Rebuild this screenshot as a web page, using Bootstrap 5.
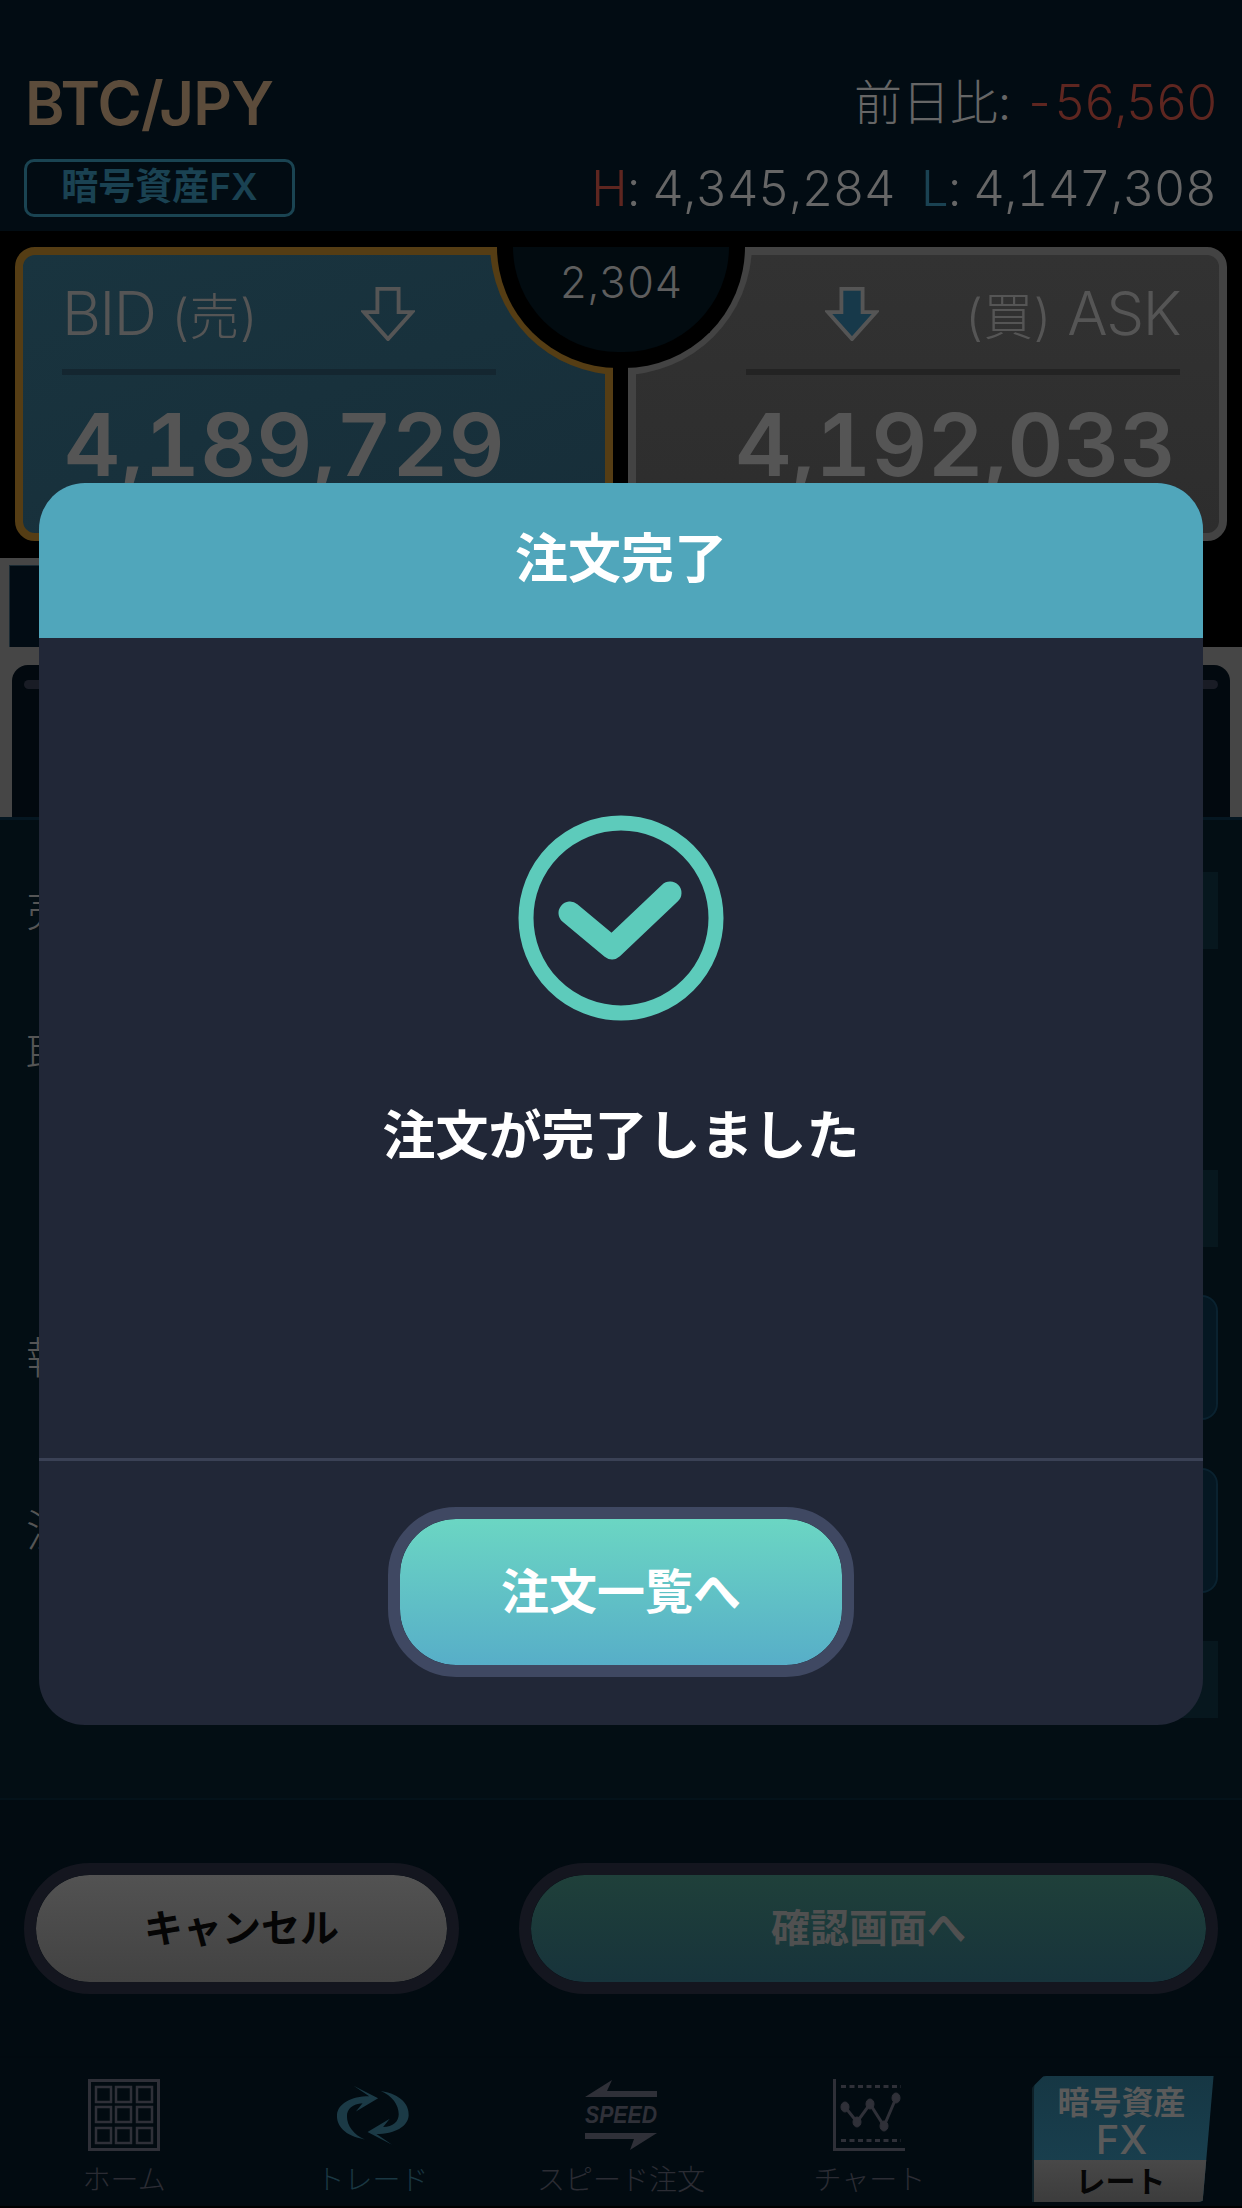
<!DOCTYPE html>
<html lang="ja">
<head>
<meta charset="utf-8">
<title>注文完了</title>
<link href="https://cdn.jsdelivr.net/npm/bootstrap@5.3.0/dist/css/bootstrap.min.css" rel="stylesheet">
<style>
html,body{margin:0;padding:0;background:#000}
body{width:1242px;height:2208px;overflow:hidden;position:relative;font-family:Inter,"Noto Sans CJK JP",sans-serif;color:#6a6a6a;font-variant-numeric:tabular-nums}
.hdr{height:231px;background:#020c13;padding:72px 26px 0 24px}
.hdr-row{height:62px}
.hdr-row2{margin-top:25px;height:58px}
.pair{font-size:60px;font-weight:600;color:#5c4c3b;letter-spacing:-.7px;line-height:62px;margin-left:1px}
.delta{font-size:48px;line-height:62px;font-weight:300;color:#666}
.minus{color:#5e2620;font-size:49px;letter-spacing:-1.6px}
.tagbox{width:271px;height:58px;border:3px solid #1a4452;border-radius:10px;color:#1a4252;font-size:37px;font-weight:600;line-height:50px;text-align:center}
.hilo{font-size:49px;line-height:60px;font-weight:300;color:#666;letter-spacing:-.6px}
.hi{color:#5e2620}.lo{color:#1a4252;margin-left:26px}
.quote{position:relative;background:#000;padding:16px 15px 17px;height:327px;overflow:hidden}
.pane{width:598px;height:294px;border:8px solid #553d14;border-radius:20px;position:relative;overflow:hidden;padding:30px 39px 0}
.pane-bid{background:linear-gradient(160deg,#19343f,#172e39)}
.pane-ask{width:599px;margin-left:15px;border-color:#434343;background:linear-gradient(#323232,#2d2d2d)}
.ring{position:absolute;width:262px;height:262px;border-radius:50%;top:-142px;background:#553d14}
.pane-bid .ring{right:-147px}
.pane-ask .ring{left:-146px;background:#434343}
.side{width:434px;height:66px;font-size:60px;line-height:56px;color:#555;font-weight:300;letter-spacing:-1.5px;position:relative;z-index:1}
.paren{font-size:50px;font-weight:300;letter-spacing:0}
.arrow{margin:2px 81px 0 0}
.arrow-r{margin:2px 0 0 79px}
.rule{width:434px;height:6px;background:#142630;margin-top:18px;position:relative;z-index:1}
.pane-ask .rule{background:#232323}
.pane-ask .side,.pane-ask .rule{margin-left:auto}
.price{margin-left:2px;font-size:87px;font-weight:600;line-height:100px;color:#555;margin-top:20px;white-space:nowrap}
.pane-ask .price{margin-left:0;margin-right:4px;text-align:right}
.spread{position:absolute;left:497px;top:16px;width:248px;height:121px;border:16px solid #000;border-top:0;border-radius:0 0 124px 124px;background:#020b10;text-align:center;font-size:43px;line-height:66px;color:#5e5e5e;font-weight:300;padding-top:2px;z-index:2}
.tabs{height:107px;background:linear-gradient(#000 89px,#464646 89px);}
.tab-on{width:50%;height:89px;background:#464646;padding:7px 0 0 9px}
.tab-in{height:82px;background:#020c14;border:1px solid #1a2a33;border-bottom:0}
.strip{background:#464646;padding:0 12px;height:152px}
.strip-in{height:152px;background:#02090f;border-radius:16px 16px 0 0;padding:15px 12px}
.strip-bar{height:9px;border-radius:5px;background:#191c25}
.frm{height:983px;background:#030e14;border-top:3px solid #051722;border-bottom:2px solid #04121a;padding:52px 24px 0 26px}
.frm-row{font-size:44px;color:#555;font-weight:300}
.sp-a{margin-top:48px}.sp-b{margin-top:69px}.sp-c{margin-top:80px}
.h77{height:77px}.h72{height:72px}.h125{height:125px}
.fbox{width:420px;height:100%;background:#07171e}
.fbox-r{background:#051722;border:2px solid #0a2230;border-radius:16px}
.act{height:258px;background:#020b11;padding:63px 24px 0;border-bottom:2px solid #020a10}
.act-btn{height:131px;border:12px solid #14161f;border-radius:66px;font-size:39px;font-weight:700;background-clip:padding-box;padding:0;box-shadow:none}
.act-cancel{width:435px;background-image:linear-gradient(#525252,#424242);color:#050505}
.act-next{width:699px;margin-left:60px;background-image:linear-gradient(#1f403a,#17333b);color:#505050}
.tabbar{height:148px;background:#020b11;display:grid;grid-template-columns:repeat(5,248.4px);padding-top:21px}
.nav-cell{text-align:center;font-size:28px;font-weight:300;line-height:36px;color:#2b2c34}
.nav-cell svg{display:block;margin:0 auto 11px;overflow:visible}
.nav-on{color:#1a3742}
.cur{margin-left:38px;width:182px;height:126px;margin-top:-3px;background:linear-gradient(#163744,#1a4252);clip-path:polygon(12px 0,100% 0,171px 100%,0 100%,0 12px);border-radius:14px 0 18px 0;overflow:hidden;text-align:center;color:#5a5a5a;font-weight:600;font-size:32px;line-height:36px;padding:9px 4px 0 0;border-left:2px solid #0e2028}
.cur-fx{font-weight:500;font-size:40px;line-height:38px;height:39px}
.cur-sub{background:linear-gradient(#484848,#3c3c3c);height:42px;color:#060606;font-size:30px;line-height:42px;padding-right:6px;margin-right:-4px}
.cover{position:absolute;left:39px;top:483px;width:1164px;height:1242px;background:#212737;border:0;border-radius:46px;overflow:hidden;z-index:5;color:#fff}
.cover-h{height:155px;background:#50a6bb;border:0;border-radius:0!important;text-align:center;font-size:53px;font-weight:700;line-height:152px;padding:0}
.cover-b{height:820px;padding:177px 0 0;flex:none;text-align:center;font-size:53px;font-weight:700;line-height:70px}
.cover-b svg{display:block;margin:0 auto 80px}
.cover-f{height:267px;background:transparent;border:0;border-top:3px solid #3a4155;border-radius:0!important;padding:46px 0 0;text-align:center}
.go{width:466px;height:170px;border:12px solid #3f4862;border-radius:68px;background-image:linear-gradient(#6bd6c3,#57aec8);background-clip:padding-box;color:#fff;font-size:48px;font-weight:700;padding:0}
</style>
</head>
<body>
<header class="hdr">
  <div class="hdr-row d-flex justify-content-between">
    <div class="pair">BTC/JPY</div>
    <div class="delta">前日比: <span class="minus">-56,560</span></div>
  </div>
  <div class="hdr-row2 d-flex justify-content-between">
    <div class="tagbox">暗号資産FX</div>
    <div class="hilo"><span class="hi">H</span>: 4,345,284<span class="lo">L</span>: 4,147,308</div>
  </div>
</header>
<section class="quote d-flex">
  <div class="pane pane-bid">
    <div class="ring"></div>
    <div class="side d-flex justify-content-between">
      <span>BID <span class="paren">(売)</span></span>
      <svg class="arrow" width="54" height="54" viewBox="0 0 56 56"><path d="M17 2H39V26H53L28 54 3 26H17Z" fill="none" stroke="#555" stroke-width="4"/></svg>
    </div>
    <div class="rule"></div>
    <div class="price">4,189,729</div>
  </div>
  <div class="pane pane-ask">
    <div class="ring"></div>
    <div class="side d-flex justify-content-between">
      <svg class="arrow-r" width="54" height="54" viewBox="0 0 56 56"><path d="M17 2H39V26H53L28 54 3 26H17Z" fill="#17394a" stroke="#555" stroke-width="4"/></svg>
      <span><span class="paren">(買)</span> ASK</span>
    </div>
    <div class="rule"></div>
    <div class="price">4,192,033</div>
  </div>
  <div class="spread">2,304</div>
</section>
<section class="tabs"><div class="tab-on"><div class="tab-in"></div></div></section>
<section class="strip"><div class="strip-in"><div class="strip-bar"></div></div></section>
<section class="frm">
  <div class="frm-row h77 d-flex justify-content-between align-items-center"><span>売</span><div class="fbox"></div></div>
  <div class="frm-row h72 sp-b d-flex align-items-center"><span>取</span></div>
  <div class="frm-row h77 sp-c d-flex justify-content-end"><div class="fbox"></div></div>
  <div class="frm-row h125 sp-a d-flex justify-content-between align-items-center"><span>報</span><div class="fbox fbox-r"></div></div>
  <div class="frm-row h125 sp-a d-flex justify-content-between align-items-center"><span>注</span><div class="fbox fbox-r"></div></div>
  <div class="frm-row h77 sp-a d-flex justify-content-end"><div class="fbox"></div></div>
</section>
<section class="act d-flex align-items-start">
  <button class="btn act-btn act-cancel" type="button">キャンセル</button>
  <button class="btn act-btn act-next" type="button">確認画面へ</button>
</section>
<nav class="tabbar">
  <div class="nav-cell">
    <svg width="72" height="72" viewBox="0 0 72 72" fill="none" stroke="#2f3038"><rect x="1.5" y="1.5" width="69" height="69" stroke-width="3"/><g stroke-width="2.5"><rect x="8" y="8" width="15" height="15"/><rect x="28" y="8" width="15" height="15"/><rect x="49" y="8" width="15" height="15"/><rect x="8" y="28" width="15" height="15"/><rect x="28" y="28" width="15" height="15"/><rect x="49" y="28" width="15" height="15"/><rect x="8" y="49" width="15" height="15"/><rect x="28" y="49" width="15" height="15"/><rect x="49" y="49" width="15" height="15"/></g></svg>
    ホーム
  </div>
  <div class="nav-cell nav-on">
    <svg width="72" height="72" viewBox="828 60 217 217" fill="#1b3a46"><path d="M912 242C850 232 826 200 828 168C830 135 870 112 925 112L878 80L952 118L885 158L905 133C875 135 858 150 858 172C858 200 878 228 912 242Z"/><path transform="rotate(180 936 169)" d="M912 242C850 232 826 200 828 168C830 135 870 112 925 112L878 80L952 118L885 158L905 133C875 135 858 150 858 172C858 200 878 228 912 242Z"/></svg>
    トレード
  </div>
  <div class="nav-cell">
    <svg width="72" height="72" viewBox="0 0 72 72" fill="#2f3038"><path d="M0 18L27 1 22 12H72V18Z"/><text x="0" y="44" font-family="Liberation Sans" font-weight="700" font-style="italic" font-size="23" textLength="72" lengthAdjust="spacingAndGlyphs">SPEED</text><path d="M0 54H72L45 71 49 60H0Z"/></svg>
    スピード注文
  </div>
  <div class="nav-cell">
    <svg width="72" height="72" viewBox="0 0 72 72" fill="#2f3038" stroke="#2f3038"><path d="M1.5 0V70.5H72" fill="none" stroke-width="3"/><path d="M8 7.5H68M8 61.5H68" fill="none" stroke-width="3" stroke-dasharray="5 3.5"/><path d="M12 28L24 43 37 25 51 47 63 19" fill="none" stroke-width="3"/><ellipse cx="12" cy="28" rx="4" ry="5"/><ellipse cx="24" cy="43" rx="4" ry="5"/><ellipse cx="37" cy="25" rx="4" ry="5"/><ellipse cx="51" cy="47" rx="4" ry="5"/><ellipse cx="63" cy="19" rx="4" ry="5"/></svg>
    チャート
  </div>
  <div class="cur">
    暗号資産
    <div class="cur-fx">FX</div>
    <div class="cur-sub">レート</div>
  </div>
</nav>

<div class="card cover">
  <div class="card-header cover-h">注文完了</div>
  <div class="card-body cover-b">
    <svg width="206" height="206" viewBox="0 0 206 206" fill="none" stroke="#5dcbbb"><circle cx="103" cy="103" r="95" stroke-width="15"/><path d="M52 98L94 133 152 78" stroke-width="23" stroke-linecap="round" stroke-linejoin="round"/></svg>
    注文が完了しました
  </div>
  <div class="card-footer cover-f">
    <button class="btn go" type="button">注文一覧へ</button>
  </div>
</div>
<script src="https://cdn.jsdelivr.net/npm/bootstrap@5.3.0/dist/js/bootstrap.bundle.min.js"></script>
</body>
</html>
